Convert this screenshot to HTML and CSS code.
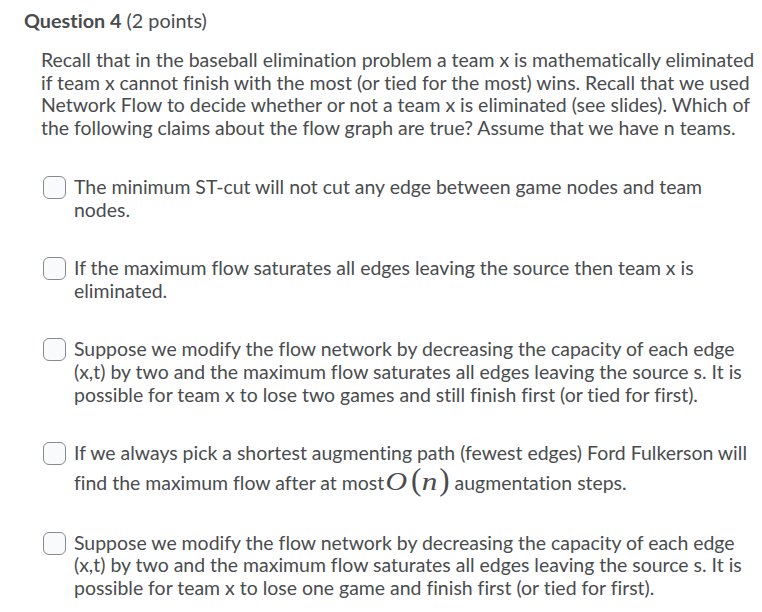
FILE: index.html
```html
<!DOCTYPE html>
<html>
<head>
<meta charset="utf-8">
<link rel="stylesheet" href="styles.css">
</head>
<body>
<div class="question">
  <h2 class="q-title"><strong>Question 4</strong> (2 points)</h2>
  <div class="q-body">
    <p class="prompt">Recall that in the baseball elimination problem a team x is mathematically eliminated if team x cannot finish with the most (or tied for the most) wins. Recall that we used Network Flow to decide whether or not a team x is eliminated (see slides). Which of the following claims about the flow graph are true? Assume that we have n teams.</p>
    <ul class="options">
      <li class="option"><span class="box"></span><span class="label">The minimum ST-cut will not cut any edge between game nodes and team nodes.</span></li>
      <li class="option"><span class="box"></span><span class="label">If the maximum flow saturates all edges leaving the source then team x is eliminated.</span></li>
      <li class="option"><span class="box"></span><span class="label">Suppose we modify the flow network by decreasing the capacity of each edge (x,t) by two and the maximum flow saturates all edges leaving the source s. It is possible for team x to lose two games and still finish first (or tied for first).</span></li>
      <li class="option"><span class="box"></span><span class="label">If we always pick a shortest augmenting path (fewest edges) Ford Fulkerson will find the maximum flow after at most<span class="math"><i class="mo">O</i><span class="paren">(</span><i class="mn">n</i><span class="paren">)</span></span> augmentation steps.</span></li>
      <li class="option"><span class="box"></span><span class="label">Suppose we modify the flow network by decreasing the capacity of each edge (x,t) by two and the maximum flow saturates all edges leaving the source s. It is possible for team x to lose one game and finish first (or tied for first).</span></li>
    </ul>
  </div>
</div>
</body>
</html>
```

FILE: styles.css
```css
html, body {
  margin: 0;
  padding: 0;
  background: #ffffff;
}
body {
  font-family: Lato, "Open Sans", sans-serif;
  color: #494c4e;
  font-variant-ligatures: none;
}
.question {
  padding: 8px 4px 0 24px;
}
.q-title {
  margin: 0;
  font-size: 19.8px;
  font-weight: normal;
  line-height: 25px;
}
.q-title strong {
  font-weight: 700;
}
.q-body {
  padding-left: 17px;
}
.prompt {
  margin: 16px 0 0 0;
  font-size: 19.45px;
  line-height: 22.5px;
}
.options {
  list-style: none;
  margin: 37px 0 0 0;
  padding: 0;
}
.option {
  display: flex;
  align-items: flex-start;
  font-size: 19.45px;
  line-height: 22.6px;
  margin-bottom: 36px;
}
.box {
  flex: none;
  width: 21px;
  height: 21px;
  border: 1px solid #868a8e;
  border-radius: 6px;
  background: #f9fafb;
  margin: 0 8px 0 2px;
}
.label {
  flex: 1;
}
.math {
  font-family: "Liberation Serif", "DejaVu Serif", serif;
  font-size: 26px;
  line-height: 29px;
  margin-left: 3px;
}
.mo {
  font-style: italic;
  display: inline-block;
  transform: scaleX(1.15);
  margin-right: 5px;
}
.mn {
  font-style: italic;
  display: inline-block;
  transform: scaleX(1.2);
  margin: 0 3px 0 2px;
}
.paren {
  font-size: 31px;
  font-style: normal;
}
```
